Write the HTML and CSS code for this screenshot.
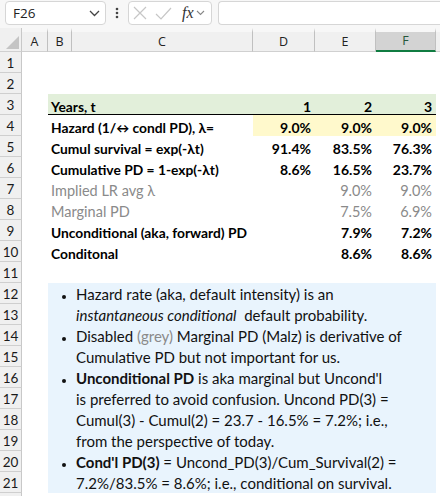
FILE: index.html
```html
<!DOCTYPE html>
<html>
<head>
<meta charset="utf-8">
<link rel="stylesheet" href="styles.css">
</head>
<body>
<div class="topbar">
  <div class="namebox">
    <span class="namebox-text">F26</span>
    <svg class="chev" width="11" height="7" viewBox="0 0 11 7"><path d="M1 1 L5.5 5.5 L10 1" fill="none" stroke="#444" stroke-width="1.3"/></svg>
  </div>
  <div class="vdots">
    <svg width="4" height="12" viewBox="0 0 4 12"><circle cx="2" cy="2" r="1.3" fill="#444"/><circle cx="2" cy="6" r="1.3" fill="#444"/><circle cx="2" cy="10" r="1.3" fill="#444"/></svg>
  </div>
  <div class="fxbox">
    <svg width="14" height="14" viewBox="0 0 14 14"><path d="M1 1 L13 13 M13 1 L1 13" stroke="#c6c6c6" stroke-width="1.2" fill="none"/></svg>
    <svg width="17" height="13" viewBox="0 0 17 13"><path d="M1 7 L6 12 L16 1" stroke="#c6c6c6" stroke-width="1.2" fill="none"/></svg>
    <span class="fx">fx</span>
    <svg width="9" height="6" viewBox="0 0 9 6"><path d="M1 1 L4.5 4.5 L8 1" fill="none" stroke="#888" stroke-width="1.1"/></svg>
  </div>
  <div class="formula"></div>
</div>

<div class="sheet">
  <div class="corner"><svg width="13" height="13" viewBox="0 0 13 13"><polygon points="0,13 13,13 13,0" fill="#c4c4c4"/></svg></div>
  <div class="colhdr">A</div>
  <div class="colhdr">B</div>
  <div class="colhdr">C</div>
  <div class="colhdr">D</div>
  <div class="colhdr">E</div>
  <div class="colhdr sel">F</div>
  <div class="colhdr rest"></div>

  <div class="rowhdr r1">1</div>
  <div class="rowhdr r2">2</div>
  <div class="rowhdr r3">3</div>
  <div class="rowhdr r4">4</div>
  <div class="rowhdr r5">5</div>
  <div class="rowhdr r6">6</div>
  <div class="rowhdr r7">7</div>
  <div class="rowhdr r8">8</div>
  <div class="rowhdr r9">9</div>
  <div class="rowhdr r10">10</div>
  <div class="rowhdr r11">11</div>
  <div class="rowhdr r12">12</div>
  <div class="rowhdr r13">13</div>
  <div class="rowhdr r14">14</div>
  <div class="rowhdr r15">15</div>
  <div class="rowhdr r16">16</div>
  <div class="rowhdr r17">17</div>
  <div class="rowhdr r18">18</div>
  <div class="rowhdr r19">19</div>
  <div class="rowhdr r20">20</div>
  <div class="rowhdr r21">21</div>
  <div class="rowhdr r22"></div>

  <div class="band r3"></div>
  <div class="cell lab b r3">Years, t</div>
  <div class="cell num b r3 cD">1</div>
  <div class="cell num b r3 cE">2</div>
  <div class="cell num b r3 cF">3</div>

  <div class="cell lab b r4">Hazard (1/<span class="arr">↔</span> condl PD), λ=</div>
  <div class="cell num b r4 cD yel">9.0%</div>
  <div class="cell num b r4 cE yel">9.0%</div>
  <div class="cell num b r4 cF yel">9.0%</div>

  <div class="cell lab b r5">Cumul survival = exp(-λt)</div>
  <div class="cell num b r5 cD">91.4%</div>
  <div class="cell num b r5 cE">83.5%</div>
  <div class="cell num b r5 cF">76.3%</div>

  <div class="cell lab b r6">Cumulative PD = 1-exp(-λt)</div>
  <div class="cell num b r6 cD">8.6%</div>
  <div class="cell num b r6 cE">16.5%</div>
  <div class="cell num b r6 cF">23.7%</div>

  <div class="cell lab grey r7">Implied LR avg λ</div>
  <div class="cell num grey r7 cE">9.0%</div>
  <div class="cell num grey r7 cF">9.0%</div>

  <div class="cell lab grey r8">Marginal PD</div>
  <div class="cell num grey r8 cE">7.5%</div>
  <div class="cell num grey r8 cF">6.9%</div>

  <div class="cell lab b r9">Unconditional (aka, forward) PD</div>
  <div class="cell num b r9 cE">7.9%</div>
  <div class="cell num b r9 cF">7.2%</div>

  <div class="cell lab b r10">Conditonal</div>
  <div class="cell num b r10 cE">8.6%</div>
  <div class="cell num b r10 cF">8.6%</div>

  <div class="notes">
    <ul>
      <li>Hazard rate (aka, default intensity) is an<br><i>instantaneous conditional</i>&nbsp; default probability.</li>
      <li>Disabled <span class="g">(grey)</span> Marginal PD (Malz) is derivative of<br>Cumulative PD but not important for us.</li>
      <li><b>Unconditional PD</b> is aka marginal but Uncond'l<br>is preferred to avoid confusion. Uncond PD(3) =<br>Cumul(3) - Cumul(2) = 23.7 - 16.5% = 7.2%; i.e.,<br>from the perspective of today.</li>
      <li><b>Cond'l PD(3)</b> = Uncond_PD(3)/Cum_Survival(2) =<br>7.2%/83.5% = 8.6%; i.e., conditional on survival.</li>
    </ul>
  </div>
</div>
</body>
</html>
```

FILE: styles.css
```css
* { box-sizing: border-box; }
html, body { margin: 0; padding: 0; }
body {
  width: 440px;
  height: 496px;
  overflow: hidden;
  background: #ffffff;
  font-family: Lato, "Open Sans", sans-serif;
  color: #000;
}

.topbar {
  height: 28px;
  background: #f7f7f7;
  display: flex;
  align-items: flex-start;
  padding: 1px 0 0 5px;
}
.namebox {
  width: 101px;
  height: 24px;
  background: #fff;
  border: 1px solid #d6d6d6;
  border-radius: 4px;
  display: flex;
  align-items: center;
  justify-content: space-between;
  padding: 0 5px 0 7px;
}
.namebox-text {
  font-family: "Open Sans", sans-serif;
  font-size: 13.5px;
  color: #222;
}
.vdots {
  width: 22px;
  height: 24px;
  display: flex;
  align-items: center;
  justify-content: center;
}
.fxbox {
  width: 84px;
  height: 24px;
  background: #fff;
  border: 1px solid #d6d6d6;
  border-radius: 4px;
  display: flex;
  align-items: center;
  gap: 8px;
  padding: 0 0 0 4px;
}
.fx {
  font-family: "Liberation Serif", serif;
  font-style: italic;
  font-size: 16px;
  color: #333;
  margin-left: 2px;
  margin-right: -6px;
}
.formula {
  flex: 1;
  margin-left: 6px;
  height: 24px;
  background: #fff;
  border: 1px solid #d6d6d6;
  border-right: none;
  border-radius: 4px 0 0 4px;
}

.sheet {
  display: grid;
  grid-template-columns: 22px 26px 24px 181px 62px 61px 60px 1fr;
  grid-template-rows: 24px repeat(22, 21px);
}

.corner {
  grid-row: 1;
  grid-column: 1;
  background: #f0f0f0;
  border-right: 1px solid #c8c8c8;
  border-bottom: 1px solid #d0d0d0;
  display: flex;
  align-items: flex-end;
  justify-content: flex-end;
  padding: 0 2px 2px 0;
}
.colhdr {
  grid-row: 1;
  background: #f0f0f0;
  border-top: 4px solid #f7f7f7;
  border-right: 1px solid #c0c0c0;
  border-bottom: 1px solid #d0d0d0;
  font-family: "Open Sans", sans-serif;
  font-size: 12.5px;
  color: #222;
  display: flex;
  align-items: center;
  justify-content: center;
  padding-bottom: 1px;
}
.colhdr.sel {
  background: #d3d3d3;
  color: #26573a;
  border-bottom: 2px solid #107c41;
}
.colhdr.rest { border-right: none; }

.rowhdr {
  grid-column: 1;
  background: #f0f0f0;
  border-right: 1px solid #c8c8c8;
  border-bottom: 1px solid #cfcfcf;
  font-family: Lato, sans-serif;
  font-size: 13.5px;
  color: #1a1a1a;
  display: flex;
  align-items: center;
  justify-content: center;
  padding-top: 1px;
}

.r1 { grid-row: 2; } .r2 { grid-row: 3; } .r3 { grid-row: 4; } .r4 { grid-row: 5; }
.r5 { grid-row: 6; } .r6 { grid-row: 7; } .r7 { grid-row: 8; } .r8 { grid-row: 9; }
.r9 { grid-row: 10; } .r10 { grid-row: 11; } .r11 { grid-row: 12; } .r12 { grid-row: 13; }
.r13 { grid-row: 14; } .r14 { grid-row: 15; } .r15 { grid-row: 16; } .r16 { grid-row: 17; }
.r17 { grid-row: 18; } .r18 { grid-row: 19; } .r19 { grid-row: 20; } .r20 { grid-row: 21; }
.r21 { grid-row: 22; } .r22 { grid-row: 23; }

.band {
  grid-column: 3 / 8;
  background: #e2efda;
  border-bottom: 1px solid #000;
}

.cell {
  font-size: 14px;
  line-height: 21px;
  padding-top: 2px;
  white-space: nowrap;
}
.cell.b { font-weight: 700; }
.cell.grey { color: #8a8a8a; font-size: 14.5px; }
.lab { grid-column: 3 / 6; padding-left: 3px; }
.lab.b { font-size: 13.8px; }
.num { text-align: right; padding-right: 4px; }
.cD { grid-column: 5; }
.cE { grid-column: 6; }
.cF { grid-column: 7; }
.yel { background: #fff9cc; }
.arr { font-size: 13px; vertical-align: 0; }

.notes {
  grid-column: 3 / 8;
  grid-row: 13 / 23;
  background: #e9f4fd;
  font-size: 15px;
  line-height: 21px;
  color: #111;
  padding-top: 1px;
}
.notes ul {
  margin: 0;
  padding: 0 0 0 28px;
}
.notes li {
  list-style: disc;
  padding-left: 0;
}
.notes li::marker { font-size: 11px; }
.notes .g { color: #8a8a8a; }
```
